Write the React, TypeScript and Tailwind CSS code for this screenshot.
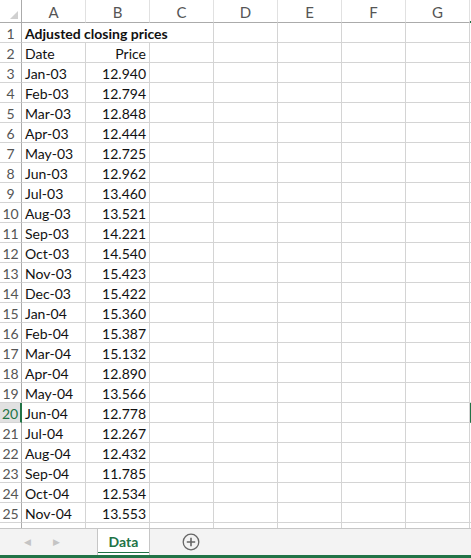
const rows: [string, string][] = [
  ["Jan-03", "12.940"],
  ["Feb-03", "12.794"],
  ["Mar-03", "12.848"],
  ["Apr-03", "12.444"],
  ["May-03", "12.725"],
  ["Jun-03", "12.962"],
  ["Jul-03", "13.460"],
  ["Aug-03", "13.521"],
  ["Sep-03", "14.221"],
  ["Oct-03", "14.540"],
  ["Nov-03", "15.423"],
  ["Dec-03", "15.422"],
  ["Jan-04", "15.360"],
  ["Feb-04", "15.387"],
  ["Mar-04", "15.132"],
  ["Apr-04", "12.890"],
  ["May-04", "13.566"],
  ["Jun-04", "12.778"],
  ["Jul-04", "12.267"],
  ["Aug-04", "12.432"],
  ["Sep-04", "11.785"],
  ["Oct-04", "12.534"],
  ["Nov-04", "13.553"],
];

const cols = ["A", "B", "C", "D", "E", "F", "G"];

const EmptyCells = ({ from }: { from: number }) => (
  <>
    {cols.slice(from).map((c) => (
      <div key={c} className="w-[64px] shrink-0 border-r border-b border-[#d4d4d4]" />
    ))}
  </>
);

const Row = ({
  n,
  a,
  b,
  bold,
  selected,
}: {
  n: number;
  a?: string;
  b?: string;
  bold?: boolean;
  selected?: boolean;
}) => (
  <div className="flex h-[20px]">
    <div
      className={`flex w-[22px] shrink-0 items-center justify-center border-b border-[#d4d4d4] pt-[1px] text-[14px] ${
        selected
          ? "border-r-2 border-r-[#217346] bg-[#e1e1e1] text-[#217346]"
          : "border-r border-r-[#ababab] text-[#555]"
      }`}
    >
      {n}
    </div>
    {bold ? (
      <div className="relative w-[64px] shrink-0 border-b border-[#d4d4d4]">
        <span className="absolute left-[3px] top-[1px] whitespace-nowrap text-[14px] font-bold leading-[19px]">
          {a}
        </span>
      </div>
    ) : (
      <div className="flex w-[64px] shrink-0 items-center border-r border-b border-[#d4d4d4] pt-[1px] pl-[3px] text-[14px]">
        {a}
      </div>
    )}
    <div
      className={`flex w-[64px] shrink-0 items-center justify-end border-b border-[#d4d4d4] pt-[1px] pr-[3px] text-[14px] ${
        bold ? "" : "border-r"
      }`}
    >
      {b}
    </div>
    {bold ? (
      <>
        <div className="w-[64px] shrink-0 border-r border-b border-[#d4d4d4]" />
        <EmptyCells from={3} />
      </>
    ) : (
      <EmptyCells from={2} />
    )}
    <div
      className={`flex-1 border-b border-[#d4d4d4] ${selected ? "border-l-2 border-l-[#217346]" : ""}`}
    />
  </div>
);

export default function App() {
  return (
    <div className="flex h-[558px] w-[471px] flex-col overflow-hidden bg-white font-['Lato',sans-serif] text-[#111]">
      {/* column headers */}
      <div className="flex h-[23px] shrink-0">
        <div className="relative w-[22px] shrink-0 border-r border-b border-[#ababab]">
          <div className="absolute bottom-[3px] right-[3px] h-0 w-0 border-b-[8px] border-l-[8px] border-b-[#d0d0d0] border-l-transparent" />
        </div>
        {cols.map((c) => (
          <div
            key={c}
            className="flex w-[64px] shrink-0 items-center justify-center border-r border-b border-r-[#e1e1e1] border-b-[#ababab] pt-[2px] text-[15px] text-[#555]"
          >
            {c}
          </div>
        ))}
        <div className="flex-1 border-b-2 border-[#217346]" />
      </div>

      <Row n={1} a="Adjusted closing prices" bold />
      <Row n={2} a="Date" b="Price" />
      {rows.map(([a, b], i) => (
        <Row key={a} n={i + 3} a={a} b={b} selected={i + 3 === 20} />
      ))}
      <div className="flex h-[5px] shrink-0">
        <div className="w-[22px] shrink-0 border-r border-[#ababab]" />
        {cols.map((c) => (
          <div key={c} className="w-[64px] shrink-0 border-r border-[#d4d4d4]" />
        ))}
      </div>

      {/* sheet tabs */}
      <div className="flex h-[30px] shrink-0 flex-col border-t border-[#c6c6c6] bg-[#f3f3f3]">
        <div className="flex h-[26px] items-stretch">
          <div className="flex w-[97px] items-center gap-[22px] pl-[24px] text-[9px] text-[#c4c4c4]">
            <span>◀</span>
            <span>▶</span>
          </div>
          <div className="flex w-[53px] flex-col border-r border-l border-[#c6c6c6] bg-white">
            <div className="flex flex-1 items-center justify-center pt-[2px] text-[14px] font-bold text-[#217346]">
              Data
            </div>
            <div className="mb-[2px] h-[2px] bg-[#217346]" />
          </div>
          <div className="flex items-center pl-[32px]">
            <svg width="18" height="18" viewBox="0 0 18 18" fill="none" stroke="#666" strokeWidth="1.3">
              <circle cx="9" cy="9" r="7.8" />
              <path d="M9 4.8v8.4M4.8 9h8.4" strokeWidth="1.6" />
            </svg>
          </div>
        </div>
        <div className="mt-auto h-[3px] bg-[#217346]" />
      </div>
    </div>
  );
}
